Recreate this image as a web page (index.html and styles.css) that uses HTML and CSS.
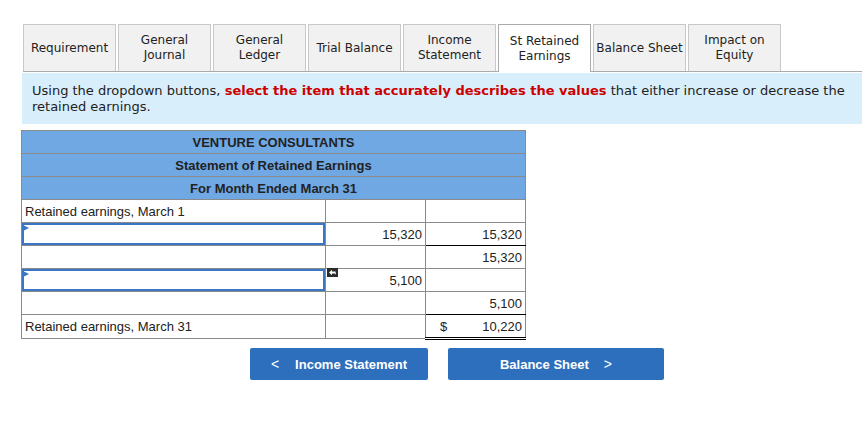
FILE: index.html
```html
<!DOCTYPE html>
<html lang="en">
  <head>
    <meta charset="UTF-8" />
    <meta name="viewport" content="width=device-width, initial-scale=1.0" />
    <title>Statement of Retained Earnings</title>
    <link rel="stylesheet" href="styles.css">
  </head>
  <body>
    <div class="tabs">
      <div class="tab">Requirement</div>
      <div class="tab">General<br />Journal</div>
      <div class="tab">General<br />Ledger</div>
      <div class="tab">Trial Balance</div>
      <div class="tab">Income<br />Statement</div>
      <div class="tab active">St Retained<br />Earnings</div>
      <div class="tab">Balance Sheet</div>
      <div class="tab">Impact on<br />Equity</div>
    </div>

    <div class="info">
      Using the dropdown buttons, <strong>select the item that accurately describes the values</strong> that either increase or decrease the retained earnings.
    </div>

    <table class="statement">
      <tr class="head"><th colspan="3">VENTURE CONSULTANTS</th></tr>
      <tr class="head"><th colspan="3">Statement of Retained Earnings</th></tr>
      <tr class="head"><th colspan="3">For Month Ended March 31</th></tr>
      <tr>
        <td class="label">Retained earnings, March 1</td>
        <td class="num"></td>
        <td class="num"></td>
      </tr>
      <tr>
        <td class="label pick"><div class="select"></div></td>
        <td class="num">15,320</td>
        <td class="num rule">15,320</td>
      </tr>
      <tr>
        <td class="label"></td>
        <td class="num"></td>
        <td class="num">15,320</td>
      </tr>
      <tr>
        <td class="label pick"><div class="select"></div></td>
        <td class="num flagged">
          <svg class="undo" width="11" height="9" viewBox="0 0 11 9">
            <rect width="11" height="9" fill="#2b2b2b" />
            <path d="M2 4.5 L5 1.8 L5 3.5 L8.5 3.5 L9 6.5 L7.5 5.4 L5 5.4 L5 7.2 Z" fill="#fff" />
          </svg>
          5,100
        </td>
        <td class="num"></td>
      </tr>
      <tr>
        <td class="label"></td>
        <td class="num"></td>
        <td class="num rule">5,100</td>
      </tr>
      <tr>
        <td class="label">Retained earnings, March 31</td>
        <td class="num"></td>
        <td class="num total"><span class="cur">$</span>10,220</td>
      </tr>
    </table>

    <div class="nav">
      <button class="prev"><span class="arrow left">&lt;</span>Income Statement</button>
      <button class="next">Balance Sheet<span class="arrow right">&gt;</span></button>
    </div>
  </body>
</html>
```

FILE: styles.css
```css
body {
  margin: 0;
  font-family: "Liberation Sans", Arial, sans-serif;
  color: #222;
}
.tabs {
  display: flex;
  gap: 2px;
  margin: 24px 0 0 23px;
  border-bottom: 1px solid #aaa;
}
.tab {
  width: 91px;
  height: 46px;
  display: flex;
  align-items: center;
  justify-content: center;
  text-align: center;
  font-family: "DejaVu Sans", Verdana, sans-serif;
  font-size: 12px;
  line-height: 15px;
  background-color: #f1f1f1;
  border: 1px solid #c8c8c8;
  border-bottom: none;
}
.tab.active {
  background-color: #fff;
  height: 47px;
  margin-bottom: -1px;
  border-color: #aaa;
}
.info {
  margin: 1px 0 0 22px;
  padding: 10px 10px 9px 10px;
  background-color: #d9eefb;
  font-family: "DejaVu Sans", Verdana, sans-serif;
  font-size: 13px;
  line-height: 16px;
  color: #222;
}
.info strong {
  color: #c00;
}
.statement {
  margin: 6px 0 0 21px;
  border-collapse: collapse;
  font-size: 13px;
}
.statement th,
.statement td {
  border: 1px solid #8a8a8a;
  height: 22px;
  padding: 0 3px;
}
.head th {
  background-color: #70a8e4;
  font-weight: bold;
  color: #222;
}
.label {
  width: 297px;
}
.num {
  width: 93px;
  text-align: right;
}
.label.pick {
  padding: 0;
}
.select {
  position: relative;
  height: 18px;
  border: 2px solid #3b76c4;
  background-color: #fff;
}
.select::before {
  content: "";
  position: absolute;
  top: 0;
  left: -1px;
  border-left: 6px solid #3b76c4;
  border-top: 3px solid transparent;
  border-bottom: 3px solid transparent;
}
.flagged {
  position: relative;
}
.undo {
  position: absolute;
  top: -1px;
  left: 1px;
}
.rule {
  border-bottom: 1px solid #000 !important;
}
.total {
  border-bottom: 3px double #000 !important;
}
.cur {
  float: left;
  margin-left: 11px;
}
.nav {
  display: flex;
  gap: 20px;
  margin: 8px 0 0 250px;
}
.nav button {
  height: 32px;
  border: none;
  border-radius: 2px;
  background-color: #2e6fbd;
  color: #fff;
  font-family: "Liberation Sans", Arial, sans-serif;
  font-size: 13px;
  font-weight: bold;
}
.arrow {
  font-weight: normal;
  font-size: 14px;
}
.arrow.left {
  margin-right: 16px;
}
.arrow.right {
  margin-left: 15px;
}
.prev {
  width: 178px;
}
.next {
  width: 216px;
}
```
